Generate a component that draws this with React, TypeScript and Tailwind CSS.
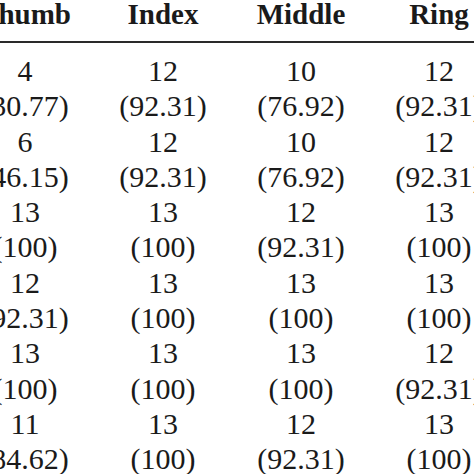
import React from "react";

const headers = ["Thumb", "Index", "Middle", "Ring"];
const rows: [string, string][][] = [
  [["4", "(30.77)"], ["12", "(92.31)"], ["10", "(76.92)"], ["12", "(92.31)"]],
  [["6", "(46.15)"], ["12", "(92.31)"], ["10", "(76.92)"], ["12", "(92.31)"]],
  [["13", "(100)"], ["13", "(100)"], ["12", "(92.31)"], ["13", "(100)"]],
  [["12", "(92.31)"], ["13", "(100)"], ["13", "(100)"], ["13", "(100)"]],
  [["13", "(100)"], ["13", "(100)"], ["13", "(100)"], ["12", "(92.31)"]],
  [["11", "(84.62)"], ["13", "(100)"], ["12", "(92.31)"], ["13", "(100)"]],
];

export default function App() {
  return (
    <div
      className="w-[474px] h-[474px] overflow-hidden bg-white text-[#1a1a1a]"
      style={{ fontFamily: '"Liberation Serif", "Times New Roman", serif' }}
    >
      <div className="ml-[-44px] grid grid-cols-[repeat(4,138px)] pb-[13px] text-[29px] leading-[28px] font-bold">
        {headers.map((h) => (
          <div key={h} className="text-center whitespace-nowrap">
            {h}
          </div>
        ))}
      </div>
      <div className="h-[2px] w-full bg-[#2a2a2a]" />
      <div className="ml-[-44px] grid grid-cols-[repeat(4,138px)] pt-[10px] text-[30px] leading-[35.3px]">
        {rows.map((r, i) =>
          r.map((c, j) => (
            <div key={`${i}-${j}`} className="flex flex-col items-center whitespace-nowrap">
              <span>{c[0]}</span>
              <span>{c[1]}</span>
            </div>
          ))
        )}
      </div>
    </div>
  );
}
